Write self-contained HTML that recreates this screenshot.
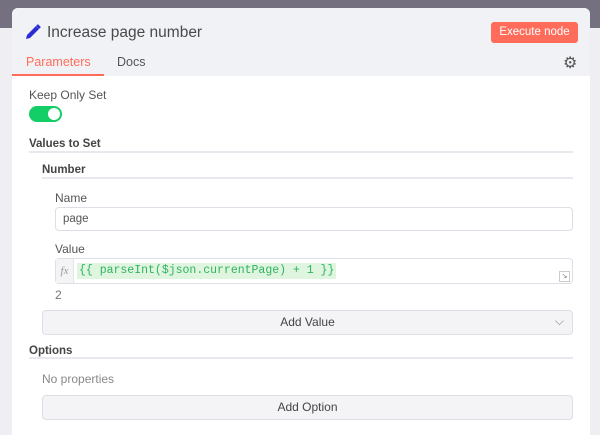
<!DOCTYPE html>
<html><head><style>
*{margin:0;padding:0;box-sizing:border-box}
html,body{width:600px;height:435px;overflow:hidden}
body{background:#eeeef3;font-family:"Liberation Sans",sans-serif;position:relative;color:#555}
.top{position:absolute;left:0;top:0;width:600px;height:28px;background:#74707f}
.card{position:absolute;left:12px;top:8px;width:578px;height:427px;background:#fff;border-radius:6px 6px 0 0;overflow:hidden}
.hdr{position:absolute;left:0;top:0;width:578px;height:68px;background:#f1f2f6}
.a{position:absolute;white-space:nowrap}
.lbl{font-size:12px;color:#555}
.b{font-weight:bold;font-size:11.5px;color:#444}
.line{position:absolute;height:2px;background:#e8e9ef}
.inp{position:absolute;border:1px solid #dcdfe6;border-radius:4px;background:#fff}
.btn{position:absolute;border:1px solid #dcdfe6;border-radius:4px;background:#f4f4f6;font-size:12px;color:#444;text-align:center;line-height:23px}
</style></head><body>
<div class="top"></div>
<div class="card">
<div class="hdr"></div>
<svg class="a" style="left:13px;top:16px" width="16" height="16" viewBox="0 0 16 16"><path d="M1 15l1-4L11 2l3 3-9 9z" fill="#2b2bd8"/><path d="M12 1l3 3" stroke="#2b2bd8" stroke-width="2.5"/></svg>
<div class="a" style="left:35px;top:16px;font-size:15.5px;color:#4a4a4a">Increase page number</div>
<div class="a" style="left:479px;top:14px;width:87px;height:21px;background:#ff6d5a;border-radius:3px;color:#fff;font-size:11.5px;text-align:center;line-height:21px">Execute node</div>
<div class="a" style="left:14px;top:47px;font-size:12.5px;color:#ff6d5a">Parameters</div>
<div class="a" style="left:105px;top:47px;font-size:12.5px;color:#555">Docs</div>
<div class="a" style="left:0;top:66px;width:92px;height:2px;background:#ff6d5a"></div>
<div class="a" style="left:551px;top:45px;font-size:16px;color:#555">⚙</div>
</div>
<div class="a lbl" style="left:29px;top:88px">Keep Only Set</div>
<div class="a" style="left:29px;top:106px;width:33px;height:16px;border-radius:8px;background:#13ce66"><div style="position:absolute;right:2px;top:2px;width:12px;height:12px;border-radius:6px;background:#fff"></div></div>
<div class="a b" style="left:29px;top:138px">Values to Set</div>
<div class="line" style="left:29px;top:151px;width:544px"></div>
<div class="a b" style="left:42px;top:164px">Number</div>
<div class="line" style="left:42px;top:177px;width:531px"></div>
<div class="a lbl" style="left:55px;top:191px">Name</div>
<div class="inp" style="left:55px;top:207px;width:518px;height:24px"><span class="a lbl" style="left:7px;top:5px;font-size:11.5px">page</span></div>
<div class="a lbl" style="left:55px;top:242px">Value</div>
<div class="inp" style="left:55px;top:258px;width:518px;height:26px">
<div class="a" style="left:0;top:0;width:18px;height:24px;background:#f4f4f6;border-right:1px solid #e4e4e8;font-family:'Liberation Serif',serif;font-style:italic;font-size:11px;color:#999;text-align:center;line-height:24px">fx</div>
<div class="a" style="left:21px;top:4px;height:16px;padding:0 2px;background:#e0f5e0;color:#2db55d;font-family:'Liberation Mono',monospace;font-size:11.5px;line-height:16px">{{ parseInt($json.currentPage) + 1 }}</div>
<div class="a" style="right:2px;top:12px;width:11px;height:11px;border:1px solid #ccc;font-size:7px;color:#777;text-align:center;line-height:9px">↘</div>
</div>
<div class="a lbl" style="left:55px;top:288px;color:#777">2</div>
<div class="btn" style="left:42px;top:310px;width:531px;height:25px">Add Value<span style="position:absolute;right:8px;top:-1px;color:#888">⌵</span></div>
<div class="a b" style="left:29px;top:345px">Options</div>
<div class="line" style="left:29px;top:357px;width:544px"></div>
<div class="a lbl" style="left:42px;top:372px;color:#888">No properties</div>
<div class="btn" style="left:42px;top:395px;width:531px;height:25px">Add Option</div>
</body></html>
